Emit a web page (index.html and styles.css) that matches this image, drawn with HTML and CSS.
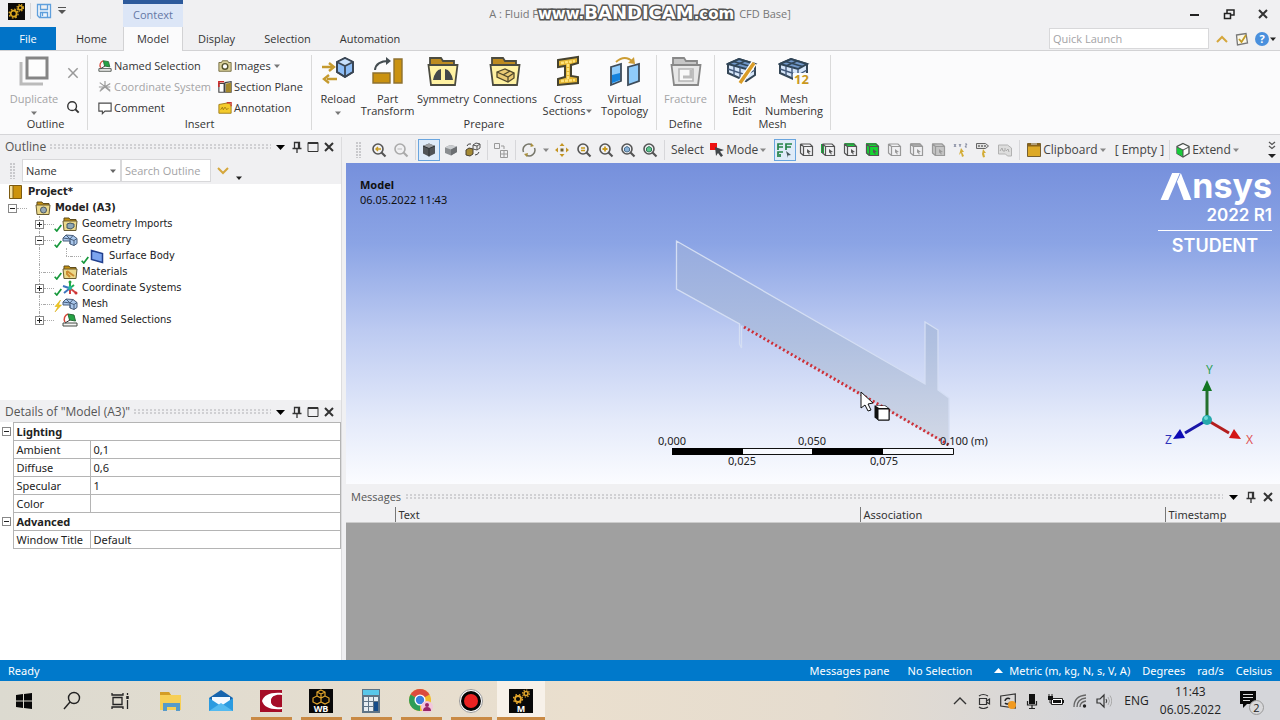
FILE: index.html
```html
<!DOCTYPE html>
<html lang="en">
<head>
<meta charset="utf-8">
<title>A : Fluid Flow - Mechanical</title>
<link rel="stylesheet" href="styles.css">
</head>
<body>
<svg class="defs" aria-hidden="true">
  <symbol id="gears" viewBox="0 0 16 16"><rect width="16" height="16" fill="#0c0a08"/><g fill="none" stroke="#d9a520"><circle cx="5.300" cy="10" r="2.800" stroke-width="1.700"/><circle cx="5.300" cy="10" r="4.200" stroke-width="1.200" stroke-dasharray="1.600 1.700"/><circle cx="11.500" cy="4.500" r="1.900" stroke-width="1.500"/><circle cx="11.500" cy="4.500" r="3.100" stroke-width="1.100" stroke-dasharray="1.300 1.200"/></g></symbol>
  <symbol id="save" viewBox="0 0 16 16"><path d="M1.500 1.500h13v13h-11l-2-2zM4.500 1.500v5h7v-5M4.500 14.500v-5h7v5M6.500 10v3" fill="#eef5fc" stroke="#5f9fdc" stroke-width="1.300"/></symbol>
  <symbol id="caret" viewBox="0 0 8 8"><path d="M1 2.500h6l-3 3.500z" fill="currentColor"/></symbol>
  <symbol id="close" viewBox="0 0 12 12"><path d="M2 2l8 8M10 2l-8 8" stroke="currentColor" stroke-width="2" fill="none"/></symbol>
  <symbol id="pin" viewBox="0 0 12 12"><path d="M3.500 7V1.500h5V7M1.500 7.500h9M6 8v4M7.500 2v5" stroke="currentColor" stroke-width="1.300" fill="none"/></symbol>
  <symbol id="maxi" viewBox="0 0 12 12"><path d="M1 1.500h10v9H1z" stroke="currentColor" fill="none"/><path d="M1 2h10" stroke="currentColor" stroke-width="2"/></symbol>
  <symbol id="lens" viewBox="0 0 16 16"><circle cx="7" cy="7" r="5" fill="none" stroke="currentColor" stroke-width="1.600"/><path d="M10.500 10.500l4 4" stroke="currentColor" stroke-width="2.200"/></symbol>
  <symbol id="cube" viewBox="0 0 16 16"><path d="M8 1.500l6 2.500v7.500L8 14.500 2 11.500V4z" fill="#515457"/><path d="M8 1.500L14 4 8 6.500 2 4z" fill="#9b9ea1"/><path d="M8 6.500v8M2 4l6 2.500L14 4" stroke="#2f3234" fill="none"/></symbol>
  <symbol id="cubegray" viewBox="0 0 16 16"><path d="M2 5.500L7 3l7 1.500V10l-6 3.500L2 11z" fill="#8a8d90"/><path d="M2 5.500L7 3l7 1.500-6 3z" fill="#c9cccf"/><path d="M8 7.500l6-3V10l-6 3.500z" fill="#6c6f72"/></symbol>
  <symbol id="pick" viewBox="0 0 16 16"><path d="M4.500 4.500h9v9h-9zM1.500 2l3 2.500M1.500 2h9.500l2.500 2.500M1.500 2v9l3 2.500" fill="none" stroke="currentColor" stroke-width="1.200"/><path d="M8 7l4 3-2 .3.800 2-1 .3-.800-2L8 11z" fill="currentColor"/></symbol>
  <symbol id="folder" viewBox="0 0 16 16"><path d="M2 5V2h5l1 1.500h6V5" fill="#c4900e" stroke="#5e4c1d"/><path d="M1 5h14l-1 9.500H2z" fill="#ebd98c" stroke="#685b32"/></symbol>
  <symbol id="solid" viewBox="0 0 16 16"><path d="M1 6l3-3 7 .500 4 3v5l-3 2L8 12V9L1 9z" fill="#a9c7ec" stroke="#485d7b"/><path d="M1 6l7 1 4 1.500v5M8 7v5M4 3l4 4 3-3.500M12 8.500l3-2" fill="none" stroke="#485d7b"/></symbol>
  <symbol id="check" viewBox="0 0 8 8"><path d="M.700 4.700l2.100 2.300L7.300 1" fill="none" stroke="#17983b" stroke-width="1.700"/></symbol>
  <symbol id="named" viewBox="0 0 16 16"><path d="M1 11h14v3H1z" fill="#f3f4f2" stroke="#454a45"/><path d="M3 10a5.500 5.500 0 0 1 3-8" fill="none" stroke="#d8483a" stroke-width="1.500"/><path d="M6 2l6 1 1.500 6-6-1z" fill="#25a345" stroke="#286b37"/><path d="M8 8L3 11" stroke="#333"/></symbol>
  <symbol id="mesh" viewBox="0 0 32 32"><path d="M2 9l11-5 16 5v11l-9 6L2 18z" fill="#d6e6fa" stroke="#354656" stroke-width="2"/><path d="M2 9l11-5 16 5-9 5z" fill="#7197c9" stroke="#304557" stroke-width="2"/><path d="M20 14v12M8 11v10M14 12.500V23M2 14l18 6 9-5" fill="none" stroke="#43597a" stroke-width="1.400"/><path d="M7.500 6.500l17 5M19 6L8 11" stroke="#304557" stroke-width="1.400"/></symbol>
  <symbol id="bigfolder" viewBox="0 0 32 32"><path d="M3 9V3h11l2 3h11v4" fill="#bd8b20" stroke="#4b4b40" stroke-width="1.800"/><path d="M1.500 10h29L28 30H4z" fill="#fff2a3" stroke="#4b4b40" stroke-width="1.800"/></symbol>
</svg>

<header class="titlebar">
  <div class="quick">
    <svg class="i18"><use href="#gears"/></svg>
    <button class="tool save" aria-label="Save"><svg class="i16"><use href="#save"/></svg></button>
    <button class="tool" aria-label="Customize"><svg class="i10"><path d="M1 1.500h8" stroke="#555"/><path d="M1 4h8L5 8z" fill="#555"/></svg></button>
  </div>
  <div class="context">Context</div>
  <div class="title"><span>A : Fluid F</span><span class="mark"><small>www.</small>BANDICAM<small>.com</small></span><span>CFD Base]</span></div>
  <div class="winbtns">
    <button aria-label="Minimize"><svg class="i12"><path d="M1 7h9" stroke="#222" stroke-width="2"/></svg></button>
    <button aria-label="Restore"><svg class="i12"><path d="M1.500 5.500h6v5h-6zM4 5V2h7v5H8" fill="none" stroke="#222" stroke-width="1.500"/></svg></button>
    <button aria-label="Close"><svg class="i12"><use href="#close"/></svg></button>
  </div>
</header>

<nav class="tabs">
  <button class="tab file">File</button><button class="tab home">Home</button><button class="tab on">Model</button><button class="tab disp">Display</button><button class="tab sel">Selection</button><button class="tab auto">Automation</button>
  <div class="launch">
    <input type="text" placeholder="Quick Launch" aria-label="Quick Launch">
    <button aria-label="Collapse ribbon"><svg class="i14"><path d="M2 10l5-5 5 5" fill="none" stroke="#d5a73c" stroke-width="2"/></svg></button>
    <button aria-label="Options"><svg class="i14"><path d="M1.500 3l9.500-1.500 1.500 9.500-10 2z" fill="#fbf8ea" stroke="#777" stroke-width="1.300"/><path d="M4 7l2.500 3L11 3" fill="none" stroke="#c39c27" stroke-width="1.800"/></svg></button>
    <button aria-label="Help" class="help"><span>?</span><svg class="i8"><use href="#caret"/></svg></button>
  </div>
</nav>

<section class="ribbon">
  <div class="group g-outline">
    <div class="body">
      <button class="big dim"><svg viewBox="0 0 32 32"><path d="M3 7v22h22" fill="none" stroke="#bbb" stroke-width="3"/><path d="M9 3h20v20H9z" fill="#fdfdfd" stroke="#858585" stroke-width="3"/></svg><span>Duplicate</span><svg class="i8"><use href="#caret"/></svg></button>
      <div class="pair">
        <button class="tool gray" aria-label="Delete"><svg class="i14" viewBox="0 0 12 12"><path d="M2 2l8 8M10 2l-8 8" stroke="#999" stroke-width="1.300"/></svg></button>
        <button class="tool" aria-label="Find"><svg class="i14"><use href="#lens"/></svg></button>
      </div>
    </div>
    <div class="cap">Outline</div>
  </div>
  <div class="group g-insert">
    <div class="body">
      <button class="small"><svg class="i14"><use href="#named"/></svg>Named Selection</button>
      <button class="small"><svg class="i14" viewBox="0 0 16 16"><path d="M1 4h3l1-2h6l1 2h3v10H1z" fill="#d8cf9a" stroke="#6b6436"/><circle cx="8" cy="8.500" r="3.200" fill="#fff" stroke="#55532f" stroke-width="1.600"/></svg>Images<svg class="i8"><use href="#caret"/></svg></button>
      <button class="small dim"><svg class="i14" viewBox="0 0 16 16"><path d="M8 8V1M8 8l6 5M8 8l-6 5M2 3l12 9M14 4L3 11M1 8h13" stroke="#9b9b9b" stroke-width="1.400"/></svg>Coordinate System</button>
      <button class="small"><svg class="i14" viewBox="0 0 16 16"><path d="M1 4h6v10H1zM8 3l7-1v12H8z" fill="#fff" stroke="#444" stroke-width="1.300"/><path d="M9 4l6-1v11H9z" fill="#a4882c"/><path d="M1 8V2h6" fill="none" stroke="#cc2828" stroke-width="1.800"/></svg>Section Plane</button>
      <button class="small"><svg class="i14" viewBox="0 0 16 16"><path d="M1 2.500h14v9H8L5 14.500v-3H1z" fill="#fff" stroke="#4a4a4a" stroke-width="1.300"/></svg>Comment</button>
      <button class="small"><svg class="i14" viewBox="0 0 16 16"><path d="M1 4l11-2 3 3v9H1z" fill="#f4cb2c" stroke="#9b7812"/><path d="M3 10l2-3 1 3 2-3 2 3 2-2" fill="none" stroke="#9b7812"/><path d="M10 2h5v4" fill="none" stroke="#c93931" stroke-width="1.500"/></svg>Annotation</button>
    </div>
    <div class="cap">Insert</div>
  </div>
  <div class="group g-prepare">
    <div class="body">
      <button class="big"><svg viewBox="0 0 32 32"><path d="M0 12h10M15 24H5" stroke="#c59a2e" stroke-width="2.400"/><path d="M7 8l5 4-5 4M7 20l-5 4 5 4" fill="none" stroke="#c59a2e" stroke-width="2.400"/><path d="M23 3l8 4v10l-8 5-8-5V7z" fill="#8dbdf6" stroke="#3a4654" stroke-width="1.800"/><path d="M23 3l8 4-8 4-8-4z" fill="#c9e1fc"/><path d="M23 3l8 4v10l-8 5-8-5V7zM15 7l8 4 8-4M23 11v11" fill="none" stroke="#3a4654" stroke-width="1.800"/></svg><span>Reload</span><svg class="i8"><use href="#caret"/></svg></button>
      <button class="big"><svg viewBox="0 0 32 32"><path d="M1 18h17v10H1zM22 4h8v24h-8z" fill="#ca9210" stroke="#8e7130" stroke-width="1.400"/><path d="M3 15q1-9 14-9" fill="none" stroke="#444d51" stroke-width="2"/><path d="M14 2l5 4-5 4z" fill="#444d51"/></svg><span>Part<br>Transform</span></button>
      <button class="big"><svg viewBox="0 0 32 32"><use href="#bigfolder"/><path d="M6 25q2-10 8-11v11zM26 25q-2-10-8-11v11z" fill="#44484a"/></svg><span>Symmetry</span></button>
      <button class="big"><svg viewBox="0 0 32 32"><use href="#bigfolder"/><path d="M8 17l8-3 9 4v5l-6 4-11-5z" fill="#e9ca75" stroke="#51492c" stroke-width="1.300"/><path d="M8 17l11 5 6-4M19 22v5M14 20l7-4" fill="none" stroke="#51492c" stroke-width="1.300"/></svg><span>Connections</span></button>
      <button class="big"><svg viewBox="0 0 32 32"><path d="M6 5l20-3v6l-7 2v11l7 1v6L6 30v-6l7-2V11l-7 1z" fill="#e3b533" stroke="#45422f" stroke-width="2"/><path d="M9 8l14-2M16 9v15M9 26l14-1" stroke="#ffe27a" stroke-width="2.400" stroke-dasharray="3 1"/></svg><span>Cross<br>Sections<svg class="i8"><use href="#caret"/></svg></span></button>
      <button class="big"><svg viewBox="0 0 32 32"><path d="M7 7q9-8 17 0" fill="none" stroke="#cc9d35" stroke-width="2"/><path d="M25 2l1 7-7-1z" fill="#cc9d35"/><path d="M2 12l10-3v17L2 30zM19 12l11-3v17l-11 4z" fill="#8fcbfa" stroke="#3e4c5a" stroke-width="1.800"/><path d="M3 20l8-2v7l-8 3z" fill="#1582dc"/></svg><span>Virtual<br>Topology</span></button>
    </div>
    <div class="cap">Prepare</div>
  </div>
  <div class="group g-define">
    <div class="body">
      <button class="big dim"><svg viewBox="0 0 32 32"><path d="M3 9V3h11l2 3h11v4" fill="#c6c6c6" stroke="#888" stroke-width="1.800"/><path d="M1.500 10h29L28 30H4z" fill="#e7e7e7" stroke="#888" stroke-width="1.800"/><path d="M9 14h14v12H9z" fill="#f8f8f8" stroke="#b5b5b5" stroke-width="1.600"/><path d="M13 22h8v-7" fill="none" stroke="#bbb" stroke-width="3"/></svg><span>Fracture</span></button>
    </div>
    <div class="cap">Define</div>
  </div>
  <div class="group g-mesh">
    <div class="body">
      <button class="big"><svg viewBox="0 0 32 32"><use href="#mesh"/><path d="M14 28L28 8" stroke="#fff" stroke-width="6"/><path d="M14 28L28 8" stroke="#d99c28" stroke-width="3.500"/></svg><span>Mesh<br>Edit</span></button>
      <button class="big"><svg viewBox="0 0 32 32"><use href="#mesh"/><rect x="15" y="18" width="17" height="12" fill="#fbfbfc"/><text x="16" y="29" font-size="13" font-weight="700" fill="#c9981d">12</text></svg><span>Mesh<br>Numbering</span></button>
    </div>
    <div class="cap">Mesh</div>
  </div>
</section>

<main class="work">
  <aside class="left">
    <section class="outline">
      <div class="phead"><h2>Outline</h2><i class="dots"></i>
        <button aria-label="Menu"><svg class="i10"><path d="M0 3h9L4.500 8z"/></svg></button><button aria-label="Pin"><svg class="i12"><use href="#pin"/></svg></button><button aria-label="Maximize"><svg class="i12"><use href="#maxi"/></svg></button><button aria-label="Close"><svg class="i12"><use href="#close"/></svg></button></div>
      <div class="search">
        <i class="grip"></i>
        <span class="pick"><select aria-label="Search by"><option>Name</option></select><svg class="i8"><use href="#caret"/></svg></span>
        <input type="text" placeholder="Search Outline" aria-label="Search Outline">
        <button aria-label="Next"><svg class="i14"><path d="M2 4l5 5 5-5" fill="none" stroke="#d5a73c" stroke-width="2"/></svg></button>
        <button class="low" aria-label="More"><svg class="i8"><use href="#caret"/></svg></button>
      </div>
      <ul class="tree">
        <li class="l0"><svg class="i16"><path d="M1.500 1.500h12v13h-12z" fill="#cc930d" stroke="#7c5a10"/><path d="M2 2h3v12H2z" fill="#f5e1a0"/><path d="M5 1v14" stroke="#7c5a10"/></svg><b>Project*</b></li>
        <li class="l1"><i class="exp minus"></i><i class="dash"></i><i class="st"></i><svg class="i16" viewBox="0 0 16 16"><use href="#folder"/><circle cx="8.500" cy="10" r="3" fill="#95a7b4" stroke="#4b5860"/></svg><b>Model (A3)</b></li>
        <li class="l2 v"><i class="exp plus"></i><i class="dash"></i><svg class="st"><use href="#check"/></svg><svg class="i16" viewBox="0 0 16 16"><use href="#folder"/><path d="M5 8l3-1 4 1v3l-3 2-4-1z" fill="#8fa8b5" stroke="#435766"/></svg><span>Geometry Imports</span></li>
        <li class="l2 v"><i class="exp minus"></i><i class="dash"></i><svg class="st"><use href="#check"/></svg><svg class="i16"><use href="#solid"/></svg><span>Geometry</span></li>
        <li class="l3 v3"><i class="noexp"></i><i class="dash"></i><svg class="st"><use href="#check"/></svg><svg class="i16" viewBox="0 0 16 16"><path d="M2.500 2.500l11 3v9l-11-3z" fill="#7ba4ee" stroke="#213f8d" stroke-width="1.500"/></svg><span>Surface Body</span></li>
        <li class="l2 v"><i class="noexp line"></i><i class="dash"></i><svg class="st"><use href="#check"/></svg><svg class="i16" viewBox="0 0 16 16"><use href="#folder"/><path d="M5 7l7 5M5 7v3l3 3" stroke="#cc8b31" stroke-width="2" fill="none"/></svg><span>Materials</span></li>
        <li class="l2 v"><i class="exp plus"></i><i class="dash"></i><svg class="st"><use href="#check"/></svg><svg class="i16" viewBox="0 0 16 16"><g stroke-width="2"><path d="M8 8V2M8 8l4-3" stroke="#21ae50"/><path d="M9 9l5 4M8 9v5" stroke="#d24545"/><path d="M7 9l-5 4M1 6l6 2" stroke="#3c74bd"/></g><circle cx="8" cy="8" r="2" fill="#27b5a3"/><circle cx="8" cy="2" r="1.500" fill="#24a33f"/><circle cx="14" cy="13" r="1.500" fill="#cf3333"/></svg><span>Coordinate Systems</span></li>
        <li class="l2 v"><i class="noexp line"></i><i class="dash"></i><svg class="st bolt" viewBox="0 0 8 12"><path d="M6.500 0L1 6.500h3L1 12l6.500-7H4.500z" fill="#f1ca1e" stroke="#d7a912" stroke-width=".5"/></svg><svg class="i16"><use href="#solid"/></svg><span>Mesh</span></li>
        <li class="l2 v end"><i class="exp plus"></i><i class="dash"></i><i class="st"></i><svg class="i16"><use href="#named"/></svg><span>Named Selections</span></li>
      </ul>
    </section>
    <section class="details">
      <div class="phead"><h2>Details of "Model (A3)"</h2><i class="dots"></i>
        <button aria-label="Menu"><svg class="i10"><path d="M0 3h9L4.500 8z"/></svg></button><button aria-label="Pin"><svg class="i12"><use href="#pin"/></svg></button><button aria-label="Maximize"><svg class="i12"><use href="#maxi"/></svg></button><button aria-label="Close"><svg class="i12"><use href="#close"/></svg></button></div>
      <table class="props">
        <colgroup><col class="cg"><col class="cn"><col></colgroup>
        <tr><td class="gut"><i class="exp minus"></i></td><th colspan="2">Lighting</th></tr>
        <tr><td class="gut"></td><td>Ambient</td><td>0,1</td></tr>
        <tr><td class="gut"></td><td>Diffuse</td><td>0,6</td></tr>
        <tr><td class="gut"></td><td>Specular</td><td>1</td></tr>
        <tr><td class="gut"></td><td>Color</td><td></td></tr>
        <tr><td class="gut"><i class="exp minus"></i></td><th colspan="2">Advanced</th></tr>
        <tr><td class="gut"></td><td>Window Title</td><td>Default</td></tr>
      </table>
    </section>
  </aside>

  <section class="right">
    <div class="toolbar">
      <i class="grip"></i>
      <button aria-label="Zoom back"><svg class="i16"><use href="#lens"/><path d="M10 7H5M7 5L5 7l2 2" stroke="#c99b1c" fill="none" stroke-width="1.400"/></svg></button>
      <button class="dim" aria-label="Zoom forward"><svg class="i16"><use href="#lens"/><path d="M4.500 7H9" stroke="#bbb"/></svg></button>
      <i class="sep"></i>
      <button class="on" aria-label="Shaded"><svg class="i16"><use href="#cube"/></svg></button>
      <button aria-label="Shaded no edges"><svg class="i16"><use href="#cubegray"/></svg></button>
      <button aria-label="Swap"><svg class="i16"><path d="M1 8l3-2 4 1v5l-3 2-4-1z" fill="#a58a35" stroke="#484033"/><path d="M8 3l3-2 4 1v4l-3 2-4-1zM8 3l4 1 3-2M12 4v4" fill="#eee" stroke="#555"/><path d="M2 4q1-3 4-2M14 10q-1 3-4 3" fill="none" stroke="#444"/></svg></button>
      <i class="sep"></i>
      <button aria-label="Align"><svg class="i16"><path d="M1.500 1.500h5v5h-5zM7.500 8.500h7v7h-7zM11 8v7M7 12h8M8 4h3v3" fill="none" stroke="#999"/></svg></button>
      <i class="sep"></i>
      <button aria-label="Rotate"><svg class="i16"><path d="M2.500 10A5.800 5.800 0 0 1 11 3M13.500 6a5.800 5.800 0 0 1-8.500 7" fill="none" stroke="#77776b" stroke-width="1.500"/><path d="M10 1l3 3-3.500 1zM6 15l-3-3 4-1z" fill="#a98f3c"/></svg></button>
      <button class="car" aria-label="Rotate menu"><svg class="i8"><use href="#caret"/></svg></button>
      <button aria-label="Pan"><svg class="i16"><path d="M8 1l2.500 3h-5zM8 15l2.500-3h-5zM1 8l3-2.500v5zM15 8l-3-2.500v5z" fill="#c59623"/><path d="M6.500 6.500h3v3h-3z" fill="#76632a"/></svg></button>
      <button aria-label="Zoom"><svg class="i16"><use href="#lens"/><path d="M5 6h4M5 8.500h4" stroke="#c99b1c" stroke-width="1.300"/></svg></button>
      <button aria-label="Box zoom"><svg class="i16"><use href="#lens"/><path d="M4.500 7h5M7 4.500v5" stroke="#c99b1c" stroke-width="1.800"/></svg></button>
      <button aria-label="Zoom fit"><svg class="i16"><use href="#lens"/><path d="M4.500 6L7 4.500 9.500 6v3L7 10 4.500 9z" fill="#8bb2d7" stroke="#4a7090"/></svg></button>
      <button aria-label="Zoom selection"><svg class="i16"><use href="#lens"/><path d="M4.500 6L7 4.500 9.500 6v3L7 10 4.500 9z" fill="#5fc58c" stroke="#32795b"/></svg></button>
      <i class="sep"></i>
      <span class="lab">Select</span>
      <button class="txt mode"><svg class="i16"><path d="M1 1h7v7H1z" fill="#ee1111"/><path d="M6 5l9 3-4 1.500 3 4-2 1.500-3-4-2 3z" fill="#42464a"/></svg>Mode<svg class="i8"><use href="#caret"/></svg></button>
      <button class="on" aria-label="Smart select"><svg class="i16"><path d="M1 8V2h5M1 5h5M9 8V2h6M9 5h5M1 15V10h5M3 12v3" fill="none" stroke="#258347" stroke-width="1.700"/><path d="M9 9l5 4-3 .500V16z" fill="#45565a"/></svg></button>
      <button aria-label="Vertex"><svg class="i16"><use href="#pick"/></svg></button>
      <button aria-label="Edge"><svg class="i16"><path d="M1.500 2v9" stroke="#14b53a" stroke-width="3"/><use href="#pick"/></svg></button>
      <button aria-label="Face"><svg class="i16"><path d="M1 1h10l3 4H4z" fill="#18cf3d"/><use href="#pick"/></svg></button>
      <button aria-label="Body"><svg class="i16"><path d="M1 1h10l3 3v10H4l-3-3z" fill="#13d631"/><use href="#pick"/></svg></button>
      <button class="mid" aria-label="Node"><svg class="i16"><use href="#pick"/></svg></button>
      <button class="mid" aria-label="Element face"><svg class="i16"><path d="M1 1h10l3 4H4z" fill="#aaa"/><use href="#pick"/></svg></button>
      <button class="mid" aria-label="Element"><svg class="i16"><path d="M1 1h10l3 3v10H4l-3-3z" fill="#c5c5c5"/><use href="#pick"/></svg></button>
      <button aria-label="Coordinates"><svg class="i16"><path d="M1 2l2 3M3 2L1 5M6 2l1 1.500L8 2M7 3v2M12 2h2l-2 3h2" stroke="#858ba0" fill="none"/><path d="M8 6l3 4H9l2 4-2 1-1-4-2 2z" fill="#d3ac36"/></svg></button>
      <button aria-label="Probe"><svg class="i16"><path d="M1.500 1.500h9l3 2.500-3 2.500h-9z" fill="#e2e2e2" stroke="#666"/><path d="M3.500 4h1M6.500 4h1M9.500 4h1" stroke="#333" stroke-width="2"/><path d="M8 7l3 4H9l1 4-2 .500L7 12z" fill="#d3ac36"/></svg></button>
      <button class="mid" aria-label="Label"><svg class="i16"><path d="M1.500 3h9l4 3v8h-4l-2-2h-7z" fill="#ddd" stroke="#b2b2b2"/><path d="M3 9l2-3 1 3h2V6M9 9l2-2 1 3" fill="none" stroke="#aaa"/></svg></button>
      <i class="sep"></i>
      <button class="txt clip"><svg class="i16"><path d="M1.500 1.500h13v13h-13z" fill="#dda927" stroke="#776030"/><path d="M2 3h12" stroke="#8a641b" stroke-width="3"/><path d="M5 2h6" stroke="#ddd"/></svg>Clipboard<svg class="i8"><use href="#caret"/></svg></button>
      <span class="lab empty">[ Empty ]</span>
      <i class="sep"></i>
      <button class="txt ext"><svg class="i16"><path d="M8 1.500l6 3v7L8 15l-6-3.500v-7z" fill="#fbfbfb" stroke="#4a504c" stroke-width="1.300"/><path d="M2 5l6 3v6.500l-6-3z" fill="#18cc3a"/><path d="M2 5l6 3 6-3M8 8v6" fill="none" stroke="#4a504c"/></svg>Extend<svg class="i8"><use href="#caret"/></svg></button>
      <button class="over" aria-label="More tools"><svg viewBox="0 0 8 18"><path d="M1 1l3 2.500L7 1M1 5l3 2.500L7 5" fill="none" stroke="#555" stroke-width="1.300"/><path d="M0 13h8l-4 4z" fill="#222"/></svg></button>
    </div>

    <div class="view">
      <svg class="scene" viewBox="346 163 934 321" preserveAspectRatio="xMidYMid meet">
        <defs><linearGradient id="skin" x1="0" y1="0" x2="0" y2="1"><stop offset="0" stop-color="#96abdf"/><stop offset=".5" stop-color="#b0c0e0"/><stop offset="1" stop-color="#d3d9e6"/></linearGradient></defs>
        <path d="M676.500 241L925 384V322l13 8v60l11 8v48L742 325l-65-36z" fill="url(#skin)"/>
        <path d="M949 445V398l-11-8V330l-13-8v62L676.500 241v48l63 35v20l2 4v-22" fill="none" stroke="#d4def3" stroke-width="1.300"/>
        <path d="M744 327L949 445" stroke="#cd3038" stroke-width="3" stroke-dasharray="2 2.500" fill="none"/>
        <g class="scale"><text x="658" y="445">0,000</text><text x="798" y="445">0,050</text><text x="940" y="445">0,100 (m)</text><text x="728" y="465">0,025</text><text x="870" y="465">0,075</text></g>
        <path d="M672.500 448.500h281v6h-281z" fill="#f8faff" stroke="#111"/><path d="M672 448h71v7h-71zM812 448h71v7h-71z"/>
        <path d="M861 392v16l4-3 3 6 3-1-3-6 5-1z" fill="#fff" stroke="#111"/>
        <path d="M874.500 405.500h11l4 3v12h-11l-4-3z" fill="#111"/><path d="M878 409h11v11h-11z" fill="#fff" stroke="#111"/><path d="M876 406h9l3 2h-9z" fill="#fff"/>
      </svg>
      <div class="caption"><b>Model</b><span>06.05.2022 11:43</span></div>
      <div class="logo">
        <div class="brand"><svg viewBox="0 0 32 29" role="img" aria-label="A"><path d="M0 29L12 1h8L8 29zM17 10l4-9 11 28h-8z" fill="#fff"/></svg><span>nsys</span></div>
        <div class="ver">2022 R1</div>
        <div class="edition">STUDENT</div>
      </div>
      <svg class="triad" viewBox="0 0 96 92">
        <path d="M45 56V24" stroke="#23702d" stroke-width="3"/><path d="M45 16l5 11H40z" fill="#137622"/>
        <path d="M45 56l22 13" stroke="#b41e1e" stroke-width="3"/><path d="M79 75l-12-1 5-9z" fill="#d31515"/>
        <path d="M45 56L23 69" stroke="#1916a8" stroke-width="3"/><path d="M11 75l7-10 5 9z" fill="#0e0bb5"/>
        <circle cx="45" cy="56" r="5" fill="#26a9ac"/><circle cx="44" cy="54" r="2" fill="#70dbd8"/>
        <text x="44" y="10" fill="#2da056">Y</text><text x="84" y="80" fill="#e05353">X</text><text x="3" y="80" fill="#2e32ba">Z</text>
      </svg>
    </div>

    <div class="messages">
      <div class="phead"><h2>Messages</h2><i class="dots"></i>
        <button aria-label="Menu"><svg class="i10"><path d="M0 3h9L4.500 8z"/></svg></button><button aria-label="Pin"><svg class="i12"><use href="#pin"/></svg></button><button aria-label="Close"><svg class="i12"><use href="#close"/></svg></button></div>
      <table class="msg"><thead><tr><th class="c0"></th><th>Text</th><th class="c2">Association</th><th class="c3">Timestamp</th></tr></thead></table>
    </div>
  </section>
</main>

<footer class="status"><span class="ready">Ready</span><span>Messages pane</span><span class="nosel">No Selection</span><span class="unit"><svg class="i10"><path d="M0 7h9L4.500 2z" fill="#fff"/></svg>Metric (m, kg, N, s, V, A)</span><span>Degrees</span><span>rad/s</span><span>Celsius</span></footer>

<div class="taskbar">
  <button class="sys" aria-label="Start"><svg viewBox="0 0 24 24"><path d="M4 6l7-1v6.500H4zM12 5l8-1v7.500h-8zM4 12.500h7V19l-7-1zM12 12.500h8V20l-8-1z" fill="#080808"/></svg></button>
  <button class="sys" aria-label="Search"><svg viewBox="0 0 24 24"><circle cx="14" cy="9" r="5.500" fill="none" stroke="#222" stroke-width="1.400"/><path d="M10 13l-6 7" stroke="#222" stroke-width="1.400"/></svg></button>
  <button class="sys" aria-label="Task view"><svg viewBox="0 0 24 24"><path d="M4 4v2h11V4M5 8.500h9v7H5zM4 20v-2h11v2M19.500 4v2M19.500 11v9" fill="none" stroke="#222" stroke-width="1.300"/><path d="M19.500 7v3" stroke="#222" stroke-width="2.500"/></svg></button>
  <button class="app" aria-label="Explorer"><svg viewBox="0 0 24 24"><path d="M1 3h9l2 3h10v15H1z" fill="#f7cf56"/><path d="M1 3h9l2 3H1z" fill="#d49d26"/><path d="M4 14h17v8h-4v-4H8v4H4z" fill="#579bc9"/></svg></button>
  <button class="app" aria-label="Mail"><svg viewBox="0 0 24 24"><path d="M0 9l12-8 12 8v13H0z" fill="#1764ad"/><path d="M3 8h18v10H3z" fill="#f4f9ff"/><path d="M0 9l12 8L24 9v13H0z" fill="#2b9be0"/><path d="M0 22l12-8 12 8z" fill="#53baf0"/></svg></button>
  <button class="app run" aria-label="CAD"><svg viewBox="0 0 24 24"><path d="M1 1h22v22H1z" fill="#a50d27"/><path d="M3 12C5 6 11 3 23 4v16C11 21 5 18 3 12z" fill="#fff"/><path d="M23 6v12c-6 1-11-1-11-6s5-7 11-6z" fill="#a50d27"/><circle cx="17" cy="12" r="5" fill="#a50d27"/></svg></button>
  <button class="app run" aria-label="Workbench"><svg viewBox="0 0 24 24"><path d="M0 0h24v24H0z" fill="#080808"/><path d="M12 1l4 2v4l4 2v4l-4 2-4-2-4 2-4-2V9l4-2V3zM8 7l4 2 4-2M12 9v4M8 3l4 2 4-2M12 5v4" fill="none" stroke="#e1a52c" stroke-width="1.200"/><text x="12" y="23" text-anchor="middle" font-size="9" font-weight="700" fill="#fff">WB</text></svg></button>
  <button class="app run" aria-label="Calculator"><svg viewBox="0 0 24 24"><path d="M3 0h18v24H3z" fill="#5f7486"/><path d="M4 1h16v5H4z" fill="#59c7ea"/><path d="M5 8h4v4H5zM10 8h4v4h-4zM15 8h4v4h-4zM5 13h4v4H5zM10 13h4v4h-4zM5 18h4v4H5zM10 18h4v4h-4z" fill="#e7edf2"/><path d="M15 13h4v9h-4z" fill="#164d8b"/></svg></button>
  <button class="app run" aria-label="Chrome"><svg viewBox="0 0 24 24"><circle cx="11" cy="11" r="11" fill="#f2bd2c"/><path d="M11 11L1.500 5.500a11 11 0 0 1 19 0z" fill="#dc4c3e"/><path d="M11 11L1.500 5.500A11 11 0 0 0 11 22z" fill="#2d9d58"/><circle cx="11" cy="11" r="5.500" fill="#fff"/><circle cx="11" cy="11" r="4.200" fill="#397fdd"/><circle cx="18" cy="18" r="6" fill="#f2c6dd"/><circle cx="18" cy="16" r="2" fill="#982567"/><path d="M14 22q0-4 4-4t4 4z" fill="#982567"/></svg></button>
  <button class="app run" aria-label="Recorder"><svg viewBox="0 0 24 24"><circle cx="12" cy="12" r="11.500" fill="#fff" stroke="#999"/><circle cx="12" cy="12" r="10" fill="#050505"/><circle cx="12" cy="12" r="7" fill="#ec2222"/></svg></button>
  <button class="app run cur" aria-label="Mechanical"><svg viewBox="0 0 24 24"><path d="M0 0h24v24H0z" fill="#080808"/><g fill="none" stroke="#e1a52c"><circle cx="9" cy="10" r="3" stroke-width="1.800"/><circle cx="9" cy="10" r="4.500" stroke-width="1.300" stroke-dasharray="1.600 2"/><circle cx="17" cy="4.500" r="2" stroke-width="1.600"/><circle cx="17" cy="4.500" r="3.500" stroke-width="1.100" stroke-dasharray="1.300 1.400"/></g><text x="12" y="23" text-anchor="middle" font-size="9" font-weight="700" fill="#fff">M</text></svg></button>
  <div class="tray">
    <button aria-label="Hidden icons"><svg class="i16"><path d="M2 11l6-6 6 6" fill="none" stroke="#333" stroke-width="1.400"/></svg></button>
    <button aria-label="Meet now"><svg class="i16"><path d="M3.500 5.500h7v6h-7zM10.500 8l3-2v5l-3-2M3 3q4-3 9 0M3 14q4 3 9 0" fill="none" stroke="#333" stroke-width="1.200"/></svg></button>
    <button aria-label="Update"><svg class="i16"><path d="M.700 3l14.600-2v14L.700 13z" fill="none" stroke="#333" stroke-width="1.200"/><path d="M5 8a3 3 0 0 1 5-2M10 9a3 3 0 0 1-5 1" fill="none" stroke="#222" stroke-width="1.500"/><circle cx="12" cy="12" r="4" fill="#f19a20"/></svg></button>
    <button aria-label="Microphone"><svg class="i16"><path d="M5 1h6v10H5z" fill="#111"/><path d="M3.500 8v4h9V8M8 12v3M5 15.500h6" fill="none" stroke="#222" stroke-width="1.200"/></svg></button>
    <button aria-label="Battery"><svg class="i16"><path d="M3.500 5.500h11v6h-11z" fill="#fff" stroke="#222"/><path d="M5 7h8v3H5zM0 3h5v4H0zM14 7h2v3h-2z" fill="#111"/><path d="M1 1v2M4 1v2M2 7v3h2" stroke="#222" fill="none"/></svg></button>
    <button aria-label="Network"><svg class="i16"><path d="M2 14Q2 3 14 2M5 14Q5 6 14 5M8 14Q8 9 14 8" fill="none" stroke="#666" stroke-width="1.300"/><circle cx="12.500" cy="13" r="1.700" fill="#222"/></svg></button>
    <button aria-label="Volume"><svg class="i16"><path d="M1 6h3l4-4v12l-4-4H1z" fill="none" stroke="#333" stroke-width="1.200"/><path d="M10 6q1.500 2 0 4" fill="none" stroke="#444" stroke-width="1.200"/><path d="M12 4q3 4 0 8M14 2.500q3.500 5.500 0 11" fill="none" stroke="#aaa"/></svg></button>
    <span class="lang">ENG</span>
    <time>11:43<br>06.05.2022</time>
    <button class="note" aria-label="2 notifications"><svg viewBox="0 0 24 24"><path d="M1 2h16v13H8l-4 4v-4H1z" fill="#080808"/><path d="M4 5.500h10M4 8.500h10M4 11.500h7" stroke="#ddd"/></svg><span>2</span></button>
  </div>
</div>
</body>
</html>
```
FILE: styles.css
```css
* { box-sizing: border-box; }
body { margin: 0; min-height: 100vh; display: flex; flex-direction: column; font: 12px/16px "Open Sans", "Noto Sans", sans-serif; color: #333; background: #f0f0f2; overflow: hidden; }
button { border: 0; padding: 0; margin: 0; background: none; font: inherit; color: inherit; display: inline-flex; align-items: center; justify-content: center; }
input, select { font: inherit; color: inherit; border: 1px solid #d8d8da; background: #fff; border-radius: 0; outline: 0; min-width: 0; }
input::placeholder { color: #a3a3a6; opacity: 1; }
svg { flex: none; display: block; }
i { font-style: normal; }
h2 { margin: 0; font-size: 12px; font-weight: 400; }
.defs { position: absolute; width: 0; height: 0; }
.i8 { width: 8px; height: 8px; }
.i10 { width: 10px; height: 10px; }
.i12 { width: 12px; height: 12px; }
.i14 { width: 14px; height: 14px; }
.i16 { width: 16px; height: 16px; }
.i18 { width: 17px; height: 17px; }

.titlebar { display: flex; height: 27px; font-size: 11px; }
.quick { width: 123px; display: flex; align-items: center; gap: 5px; padding: 0 0 5px 8px; }
.save { border-left: 1px solid #d5d5d8; padding-left: 5px; }
.context { width: 60px; border-top: 4px solid #2d5a9c; background: #dce6f7; color: #6478a5; text-align: center; line-height: 22px; }
.title { flex: 1; display: flex; justify-content: center; align-items: center; color: #777; padding-right: 92px; }
.title > span { white-space: nowrap; }
.mark { font: bold 18px/20px "DejaVu Sans", sans-serif; color: #fff; -webkit-text-stroke: 3px #555; paint-order: stroke fill; margin: 0 5px 0 0; }
.mark small { font-size: 15px; }
.winbtns { display: flex; gap: 22px; padding: 0 11px 0 0; }
.winbtns button { width: 12px; }

.tabs { display: flex; height: 24px; border-bottom: 1px solid #d2d2d4; font-size: 11px; line-height: 22px; }
.tab { height: 23px; }
.file { width: 56px; background: #0173c7; color: #fff; }
.home { width: 67px; padding-left: 4px; }
.tab.on { width: 60px; height: 24px; background: #fbfbfc; border: solid #d2d2d4; border-width: 0 1px; }
.disp { width: 67px; }
.sel { width: 75px; }
.auto { width: 90px; }
.launch { margin-left: auto; display: flex; align-items: center; gap: 6px; padding-right: 3px; }
.launch input { width: 160px; height: 21px; padding: 0 3px; }
.help span { width: 14px; height: 14px; border-radius: 50%; background: #4a90dd; color: #fff; font-weight: 700; font-size: 11px; line-height: 14px; }
.help svg { color: #222; }

.ribbon { display: flex; background: #fbfbfc; padding: 4px 0; border-bottom: 1px solid #d5d5d8; font-size: 11px; }
.group { display: flex; flex-direction: column; border-right: 1px solid #dadada; }
.group .body { height: 62px; display: grid; align-content: start; }
.cap { text-align: center; line-height: 13px; }
.big { display: flex; flex-direction: column; justify-content: flex-start; line-height: 12px; white-space: nowrap; }
.big > svg:first-child { width: 32px; height: 32px; margin-bottom: 6px; overflow: visible; }
.big > svg + span + svg { margin-top: 4px; color: #777; }
.big span svg { display: inline-block; color: #777; }
.big text { font-family: "Open Sans", sans-serif; }
.dim { color: #a4a4a6; }
.g-outline { width: 88px; }
.g-outline .body { grid-template-columns: 56px 22px; padding-left: 6px; }
.pair { display: grid; gap: 14px; padding-top: 8px; }
.g-outline .cap { padding-left: 4px; }
.g-insert { width: 224px; }
.g-insert .body { grid-template-columns: 120px 1fr; grid-auto-rows: 21px; padding-left: 10px; }
.small { justify-content: flex-start; gap: 2px; white-space: nowrap; }
.small svg.i8 { color: #777; }
.g-prepare { width: 345px; }
.g-prepare .body { grid-template-columns: 42px 57px 54px 70px 56px 57px; padding-left: 5px; }
.g-define { width: 58px; }
.g-mesh { width: 116px; }
.g-mesh .body { grid-template-columns: 46px 58px; padding-left: 4px; }

.work { flex: 1; display: grid; grid-template-columns: 342px 1fr; gap: 4px; min-height: 0; padding-top: 2px; }
.left { display: flex; flex-direction: column; gap: 2px; border-right: 1px solid #dcdcde; }
.phead { display: flex; align-items: center; height: 20px; padding: 0 6px 0 5px; gap: 4px; color: #555; }
.phead button { width: 12px; color: #333; }
.dots { flex: 1; height: 6px; background: radial-gradient(circle at 1px 1px, #d0d0d3 1px, transparent 1px) 0 0 / 4px 3px; }
.outline { height: 263px; display: flex; flex-direction: column; }
.grip { width: 5px; height: 16px; background: radial-gradient(circle at 1px 1px, #c9c9cc 1px, transparent 1px) 0 0 / 3px 3px; }
.search { display: flex; align-items: center; padding: 2px 10px; font-size: 11px; }
.pick { display: flex; align-items: center; position: relative; margin-left: 7px; }
.pick select { appearance: none; width: 99px; height: 23px; padding: 0 3px; }
.pick svg { position: absolute; right: 4px; color: #666; }
.search input { width: 90px; height: 23px; padding: 0 3px; margin-right: 5px; }
.low { align-self: end; padding-left: 5px; color: #222; }
.tree { flex: 1; margin: 0; padding: 0; list-style: none; background: #fff; font: 11px/16px "DejaVu Sans Condensed", "DejaVu Sans", sans-serif; color: #222; }
.tree li { display: flex; align-items: center; height: 16px; white-space: nowrap; position: relative; }
.tree li > span, .tree li > b { padding-left: 4px; }
.l0 { padding-left: 8px; }
.l1 { padding-left: 8px; }
.l2 { padding-left: 35px; }
.l3 { padding-left: 62px; }
.exp { display: block; width: 9px; height: 9px; border: 1px solid #888; position: relative; z-index: 1; }
.minus { background: linear-gradient(#222, #222) center / 5px 1px no-repeat #fff; }
.plus { background: linear-gradient(#222, #222) center / 5px 1px no-repeat, linear-gradient(#222, #222) center / 1px 5px no-repeat #fff; }
.noexp { width: 9px; }
.noexp.line, .l3 .noexp { border-bottom: 1px dotted #aaa; margin-left: 4px; width: 5px; }
.dash { width: 10px; border-bottom: 1px dotted #aaa; }
.st { width: 8px; height: 8px; align-self: flex-end; }
.bolt { height: 12px; }
.v::before, .v3::before { content: ""; position: absolute; left: 39px; top: 0; bottom: 0; border-left: 1px dotted #aaa; }
.end::before { bottom: 8px; }
.v3::after { content: ""; position: absolute; left: 66px; top: 0; height: 8px; border-left: 1px dotted #aaa; }
.details { flex: 1; background: #fff; }
.details .phead { background: #f0f0f2; }
.props { width: 100%; border-collapse: collapse; font-size: 11px; line-height: 17px; table-layout: fixed; color: #222; }
.props td, .props th { padding: 0 3px; height: 18px; border: 1px solid #b4b4b4; text-align: left; font-family: "Noto Sans", sans-serif; }
.props .gut { border: 0; padding: 0 0 0 2px; }
.cg { width: 13px; }
.cn { width: 77px; }

.right { display: flex; flex-direction: column; min-width: 0; }
.toolbar { display: flex; align-items: center; height: 26px; padding-left: 10px; white-space: nowrap; color: #555; }
.toolbar .grip { margin-right: 7px; }
.toolbar > button { width: 22px; height: 22px; flex: none; }
.toolbar > button.on { border: 1px solid #69a5df; background: #dfebf8; }
.toolbar > .car { width: 11px; }
.toolbar > .txt { width: auto; gap: 1px; color: #444; }
.toolbar svg.i8 { color: #888; }
.toolbar > .mid { color: #999; }
.toolbar > .dim { color: #aaa; }
.sep { flex: none; width: 1px; height: 20px; background: #d7d7da; margin: 0 2px 0 3px; }
.lab { margin: 0 5px 0 4px; color: #444; }
.toolbar > .mode { margin-right: 7px; }
.toolbar > .clip { margin-left: 4px; }
.lab.empty { margin: 0 2px 0 8px; }
.toolbar > .ext { margin-left: 3px; }
.toolbar > .over { width: 8px; margin: 0 4px 0 auto; }
.over svg { width: 8px; height: 18px; }

.view { flex: 1; position: relative; overflow: hidden; background: linear-gradient(#7690dc, #8ba4e5 25%, #bccaf1 52%, #e4eafa 80%, #fbfcff); }
.scene { position: absolute; inset: 0; width: 100%; height: 100%; }
.scale { font: 11px "Noto Sans", sans-serif; fill: #222; }
.caption { position: absolute; left: 14px; top: 14px; display: flex; flex-direction: column; font: 11px/15px "Noto Sans", sans-serif; color: #111; }
.logo { position: absolute; top: 6px; right: 8px; width: 114px; color: #fff; font: 600 17px/24px "Inter", sans-serif; text-align: right; }
.brand { display: flex; align-items: center; justify-content: flex-end; height: 34px; font: 700 34px/34px "Inter", sans-serif; }
.brand svg { width: 32px; height: 28px; }
.ver { padding-bottom: 3px; border-bottom: 1px solid #fff; }
.edition { text-align: center; font-size: 18px; line-height: 29px; }
.triad { position: absolute; right: 22px; bottom: 28px; width: 96px; height: 92px; overflow: visible; font: 12px "Noto Sans", sans-serif; }

.messages { height: 176px; display: flex; flex-direction: column; background: #a0a0a0; border-top: 3px solid #f0f0f2; }
.messages .phead { background: #f0f0f2; height: 20px; gap: 5px; }
.messages h2 { font-size: 11px; }
.msg { width: 100%; border-collapse: collapse; table-layout: fixed; background: #f0f0f2; line-height: 15px; }
.msg th { font-weight: 400; text-align: left; padding: 0 3px; border-left: 1px solid #777; border-bottom: 1px solid #ccc; font-size: 11px; font-family: "Noto Sans", sans-serif; }
.msg .c0 { width: 49px; border-left: 0; }
.msg .c2 { width: 305px; }
.msg .c3 { width: 115px; }

.status { height: 21px; flex: none; display: flex; gap: 12px; padding: 0 8px; background: #0079cb; color: #fff; font: 11px/21px "Noto Sans", sans-serif; white-space: nowrap; }
.ready { margin-right: auto; }
.nosel { padding: 0 10px 0 6px; }
.unit { display: flex; align-items: center; gap: 5px; }

.taskbar { height: 39px; flex: none; display: flex; color: #222; background: linear-gradient(90deg, #dcdad0, #eadfce 45%, #e5dccf 65%, #d5d6da 85%); }
.sys { width: 48px; }
.sys svg { width: 24px; height: 24px; }
.sys + .app { margin-left: 2px; }
.app { width: 50px; position: relative; }
.app svg { width: 24px; height: 24px; overflow: visible; }
.app text { font-family: "Open Sans", sans-serif; }
.run::after { content: ""; position: absolute; left: 5px; right: 4px; bottom: 0; height: 3px; background: #c98a45; }
.cur { background: linear-gradient(#f7f1e9, #f7f1e9) center / 48px 100% no-repeat; }
.cur::after { left: 1px; right: 1px; }
.tray { margin-left: auto; display: flex; align-items: center; gap: 8px; padding-right: 16px; }
.lang { margin: 0 3px 0 4px; }
.tray time { text-align: center; line-height: 18px; }
.note { position: relative; width: 26px; height: 28px; margin-left: 9px; }
.note svg { width: 24px; height: 24px; }
.note span { position: absolute; right: 0; bottom: 0; width: 15px; height: 15px; border: 1px solid #999; border-radius: 50%; background: #d8d8da; font-size: 11px; line-height: 13px; }
```
